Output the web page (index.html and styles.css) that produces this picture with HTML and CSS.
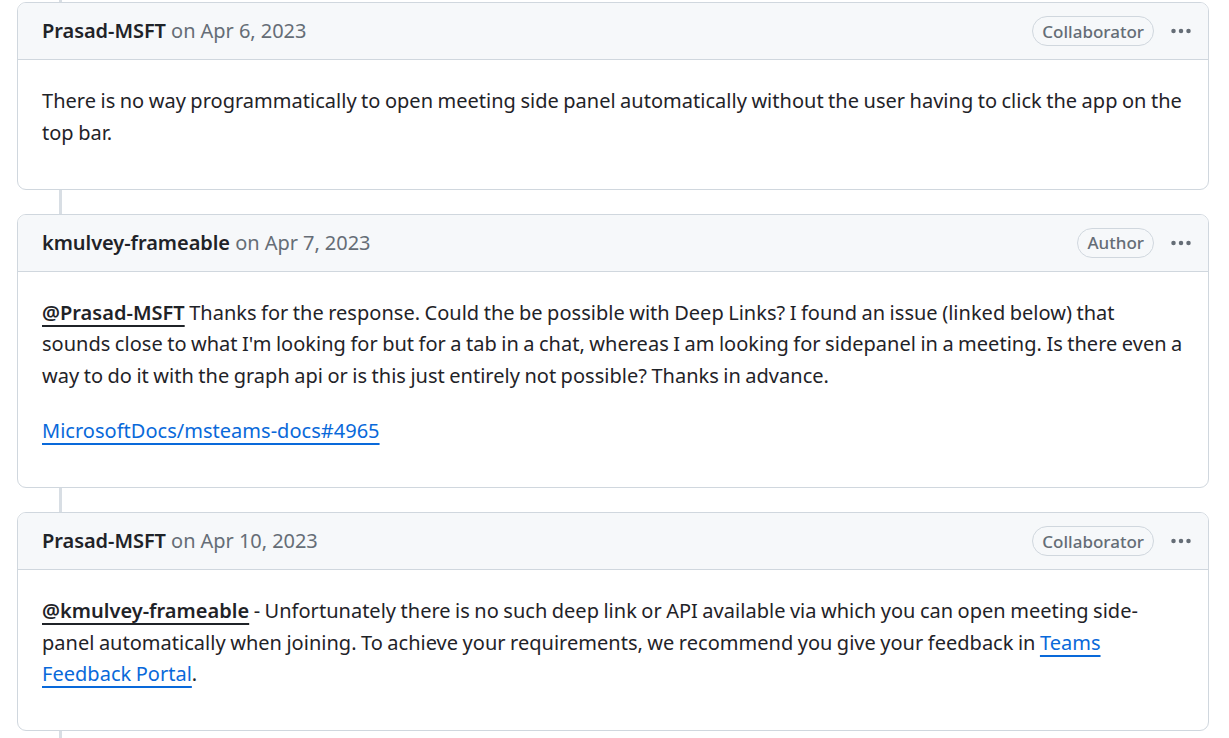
FILE: index.html
```html
<!DOCTYPE html>
<html lang="en">
<head>
<meta charset="utf-8">
<title>Discussion</title>
<link rel="stylesheet" href="styles.css">
</head>
<body>
<div class="timeline">
  <div class="connector connector-top"><div class="line"></div></div>

  <div class="comment">
    <div class="comment-header">
      <div class="meta"><a class="author" href="#">Prasad-MSFT</a> <span class="date">on Apr 6, 2023</span></div>
      <div class="actions">
        <span class="badge">Collaborator</span>
        <span class="kebab"><svg viewBox="0 0 16 16" width="24" height="24"><circle cx="3" cy="8" r="1.5"/><circle cx="8" cy="8" r="1.5"/><circle cx="13" cy="8" r="1.5"/></svg></span>
      </div>
    </div>
    <div class="comment-body">
      <p>There is no way programmatically to open meeting side panel automatically without the user having to click the app on the top bar.</p>
    </div>
  </div>

  <div class="connector"><div class="line"></div></div>

  <div class="comment">
    <div class="comment-header">
      <div class="meta"><a class="author" href="#">kmulvey-frameable</a> <span class="date">on Apr 7, 2023</span></div>
      <div class="actions">
        <span class="badge">Author</span>
        <span class="kebab"><svg viewBox="0 0 16 16" width="24" height="24"><circle cx="3" cy="8" r="1.5"/><circle cx="8" cy="8" r="1.5"/><circle cx="13" cy="8" r="1.5"/></svg></span>
      </div>
    </div>
    <div class="comment-body">
      <p><a class="mention" href="#">@Prasad-MSFT</a> Thanks for the response. Could the be possible with Deep Links? I found an issue (linked below) that sounds close to what I'm looking for but for a tab in a chat, whereas I am looking for sidepanel in a meeting. Is there even a way to do it with the graph api or is this just entirely not possible? Thanks in advance.</p>
      <p><a class="link" href="#">MicrosoftDocs/msteams-docs#4965</a></p>
    </div>
  </div>

  <div class="connector"><div class="line"></div></div>

  <div class="comment">
    <div class="comment-header">
      <div class="meta"><a class="author" href="#">Prasad-MSFT</a> <span class="date">on Apr 10, 2023</span></div>
      <div class="actions">
        <span class="badge">Collaborator</span>
        <span class="kebab"><svg viewBox="0 0 16 16" width="24" height="24"><circle cx="3" cy="8" r="1.5"/><circle cx="8" cy="8" r="1.5"/><circle cx="13" cy="8" r="1.5"/></svg></span>
      </div>
    </div>
    <div class="comment-body">
      <p><a class="mention" href="#">@kmulvey-frameable</a> - Unfortunately there is no such deep link or API available via which you can open meeting side-panel automatically when joining. To achieve your requirements, we recommend you give your feedback in <a class="link" href="#">Teams Feedback Portal</a>.</p>
    </div>
  </div>

  <div class="connector"><div class="line"></div></div>
</div>
</body>
</html>
```
FILE: styles.css
```css
* { box-sizing: border-box; }

html, body {
  margin: 0;
  padding: 0;
  background: #ffffff;
}

body {
  font-family: "Noto Sans", "Open Sans", sans-serif;
  color: #1f2328;
  font-size: 20px;
  line-height: 31.5px;
  overflow: hidden;
}

.timeline {
  padding: 0 20px 0 17px;
}

.connector {
  height: 24px;
}

.connector-top {
  height: 2px;
}

.line {
  width: 3px;
  height: 100%;
  margin-left: 42px;
  background: #d8dee4;
}

.comment {
  border: 1px solid #d0d7de;
  border-radius: 9px;
  background: #ffffff;
  overflow: hidden;
}

.comment-header {
  display: flex;
  align-items: center;
  justify-content: space-between;
  height: 57px;
  padding: 0 15px 0 24px;
  background: #f6f8fa;
  border-bottom: 1px solid #d0d7de;
}

.meta {
  font-size: 20px;
  letter-spacing: -0.05px;
  color: #656d76;
  white-space: nowrap;
}

.author {
  color: #1f2328;
  font-weight: 600;
  text-decoration: none;
}

.date {
  color: #656d76;
}

.actions {
  display: flex;
  align-items: center;
  gap: 15px;
}

.badge {
  display: inline-flex;
  align-items: center;
  height: 30px;
  padding: 0 9px;
  border: 1px solid #d0d7de;
  border-radius: 15px;
  font-size: 17px;
  line-height: 27px;
  font-weight: 500;
  color: #656d76;
}

.kebab {
  display: inline-flex;
  width: 24px;
  height: 24px;
  fill: #656d76;
}

.comment-body {
  padding: 25px 24px 40.5px 24px;
  letter-spacing: 0.02px;
  word-spacing: -0.76px;
}

.comment-body p {
  margin: 0 0 24px 0;
}

.comment-body p:last-child {
  margin-bottom: 0;
}

.mention {
  color: #1f2328;
  font-weight: 600;
  text-decoration: underline;
  text-decoration-thickness: 2px;
  text-underline-offset: 5px;
}

.link {
  color: #0969da;
  text-decoration: underline;
  text-decoration-thickness: 2px;
  text-underline-offset: 5px;
}
```
